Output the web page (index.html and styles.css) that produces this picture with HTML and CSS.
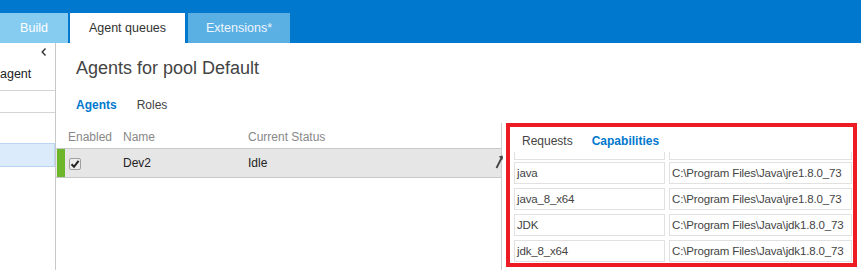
FILE: index.html
```html
<!DOCTYPE html>
<html lang="en">
<head>
  <meta charset="UTF-8" />
  <title>Agent queues</title>
  <link rel="stylesheet" href="styles.css">
</head>
<body>
  <header class="topbar">
    <nav class="tabs">
      <div class="tab tab-build">Build</div>
      <div class="tab tab-active">Agent queues</div>
      <div class="tab tab-ext">Extensions*</div>
    </nav>
  </header>

  <div class="page">
    <aside class="sidebar">
      <div class="collapse">
        <svg width="6" height="8" viewBox="0 0 6 8"><path d="M4.5 0.5 L1.2 4 L4.5 7.5" fill="none" stroke="#333" stroke-width="1.4"/></svg>
      </div>
      <div class="side-item">agent</div>
      <div class="side-item side-empty"></div>
      <div class="side-selected"></div>
    </aside>

    <main class="content">
      <h1 class="title">Agents for pool Default</h1>
      <div class="pivot">
        <span class="pivot-active">Agents</span>
        <span>Roles</span>
      </div>

      <div class="split">
        <div class="agents">
          <div class="grid-head">
            <span></span>
            <span class="cell">Enabled</span>
            <span class="cell">Name</span>
            <span class="cell">Current Status</span>
          </div>
          <div class="grid-row">
            <span class="online"></span>
            <span class="cell">
              <span class="checkbox">
                <svg width="10" height="10" viewBox="0 0 10 10"><path d="M1.5 5.2 L4 7.8 L8.6 1.8" fill="none" stroke="#222" stroke-width="2"/></svg>
              </span>
            </span>
            <span class="cell">Dev2</span>
            <span class="cell">Idle</span>
          </div>
        </div>

        <div class="splitter">
          <svg class="resize" width="8" height="16" viewBox="0 0 8 16"><path d="M7 2 L1.5 13" stroke="#444" stroke-width="1.8"/><path d="M3.8 1.4 L7.8 0.6 L7.6 5 Z" fill="#444"/></svg>
        </div>

        <section class="details">
          <div class="pivot pivot-small">
            <span>Requests</span>
            <span class="pivot-active">Capabilities</span>
          </div>
          <div class="caps">
            <div class="cap cap-cut"></div>
            <div class="cap cap-cut"></div>
            <div class="cap">java</div>
            <div class="cap">C:\Program Files\Java\jre1.8.0_73</div>
            <div class="cap">java_8_x64</div>
            <div class="cap">C:\Program Files\Java\jre1.8.0_73</div>
            <div class="cap">JDK</div>
            <div class="cap">C:\Program Files\Java\jdk1.8.0_73</div>
            <div class="cap">jdk_8_x64</div>
            <div class="cap">C:\Program Files\Java\jdk1.8.0_73</div>
          </div>
        </section>
      </div>
    </main>
  </div>
</body>
</html>
```

FILE: styles.css
```css
* {
  box-sizing: border-box;
}
body {
  margin: 0;
  width: 861px;
  height: 270px;
  overflow: hidden;
  font-family: 'Segoe UI', 'Liberation Sans', sans-serif;
  font-size: 12px;
  color: #333;
  background: #fff;
  display: flex;
  flex-direction: column;
}
.topbar {
  height: 43px;
  background: #0078cd;
  display: flex;
  align-items: flex-end;
}
.tabs {
  display: flex;
  gap: 2px;
}
.tab {
  height: 30px;
  line-height: 31px;
  text-align: center;
  color: #fff;
  font-size: 12.5px;
}
.tab-build {
  width: 68px;
  background: #86ccf0;
}
.tab-active {
  width: 115px;
  background: #fff;
  color: #333;
}
.tab-ext {
  width: 102px;
  margin-left: 1px;
  background: #5aafe3;
  color: #eef6fc;
}
.page {
  flex: 1;
  display: flex;
  min-height: 0;
}
.sidebar {
  width: 56px;
  border-right: 1px solid #c8c8c8;
  display: flex;
  flex-direction: column;
}
.collapse {
  height: 17px;
  display: flex;
  justify-content: flex-end;
  align-items: center;
  padding-right: 8px;
}
.side-item {
  height: 31px;
  line-height: 28px;
  border-bottom: 1px solid #d4d4d4;
  color: #222;
  font-size: 12.5px;
  white-space: nowrap;
}
.side-empty {
  height: 22px;
}
.side-selected {
  margin-top: 30px;
  height: 24px;
  background: #dcebfb;
  border: 1px solid #b9d6f5;
  border-left: none;
}
.content {
  flex: 1;
  display: flex;
  flex-direction: column;
  min-width: 0;
}
.title {
  margin: 0;
  padding: 13px 0 0 20px;
  font-size: 18px;
  line-height: 24px;
  font-weight: normal;
  color: #444;
}
.pivot {
  display: flex;
  gap: 20px;
  padding-left: 20px;
  margin-top: 17px;
  line-height: 16px;
  color: #444;
}
.pivot-active {
  color: #0078cd;
  font-weight: bold;
}
.split {
  flex: 1;
  display: flex;
  margin-top: 10px;
  min-height: 0;
}
.agents {
  flex: 1;
}
.grid-head,
.grid-row {
  display: grid;
  grid-template-columns: 8px 55px 125px 1fr;
  padding-left: 1px;
  border-bottom: 1px solid #c8c8c8;
}
.grid-head {
  height: 26px;
  padding-top: 6px;
  line-height: 16px;
  color: #888;
}
.grid-row {
  height: 29px;
  background: #e6e6e6;
  color: #222;
  line-height: 28px;
}
.cell {
  padding-left: 3px;
  white-space: nowrap;
}
.online {
  background: #6db52a;
}
.checkbox {
  display: inline-flex;
  align-items: center;
  justify-content: center;
  width: 12px;
  height: 12px;
  margin: 9px 0 0 1px;
  vertical-align: top;
  border: 1px solid #a0a0a0;
  border-radius: 2px;
  background: #ececec;
}
.splitter {
  width: 1px;
  background: #cdcdcd;
  position: relative;
}
.resize {
  position: absolute;
  left: -6px;
  top: 32px;
}
.details {
  width: 351px;
  margin: 0 4px 3px 4px;
  border: 4px solid #ed1c24;
  overflow: hidden;
}
.pivot-small {
  margin-top: 0;
  padding: 6px 0 0 12px;
  gap: 19px;
}
.caps {
  display: grid;
  grid-template-columns: 151px 1fr;
  grid-template-rows: 6px;
  grid-auto-rows: 22px;
  column-gap: 4px;
  row-gap: 4px;
  padding: 3px 1px 0 4px;
}
.cap {
  border: 1px solid #e1e1e1;
  padding-left: 2px;
  line-height: 20px;
  font-size: 11.5px;
  letter-spacing: -0.15px;
  color: #444;
  white-space: nowrap;
}
.cap-cut {
  border-top: none;
  margin-bottom: -2px;
}
```
